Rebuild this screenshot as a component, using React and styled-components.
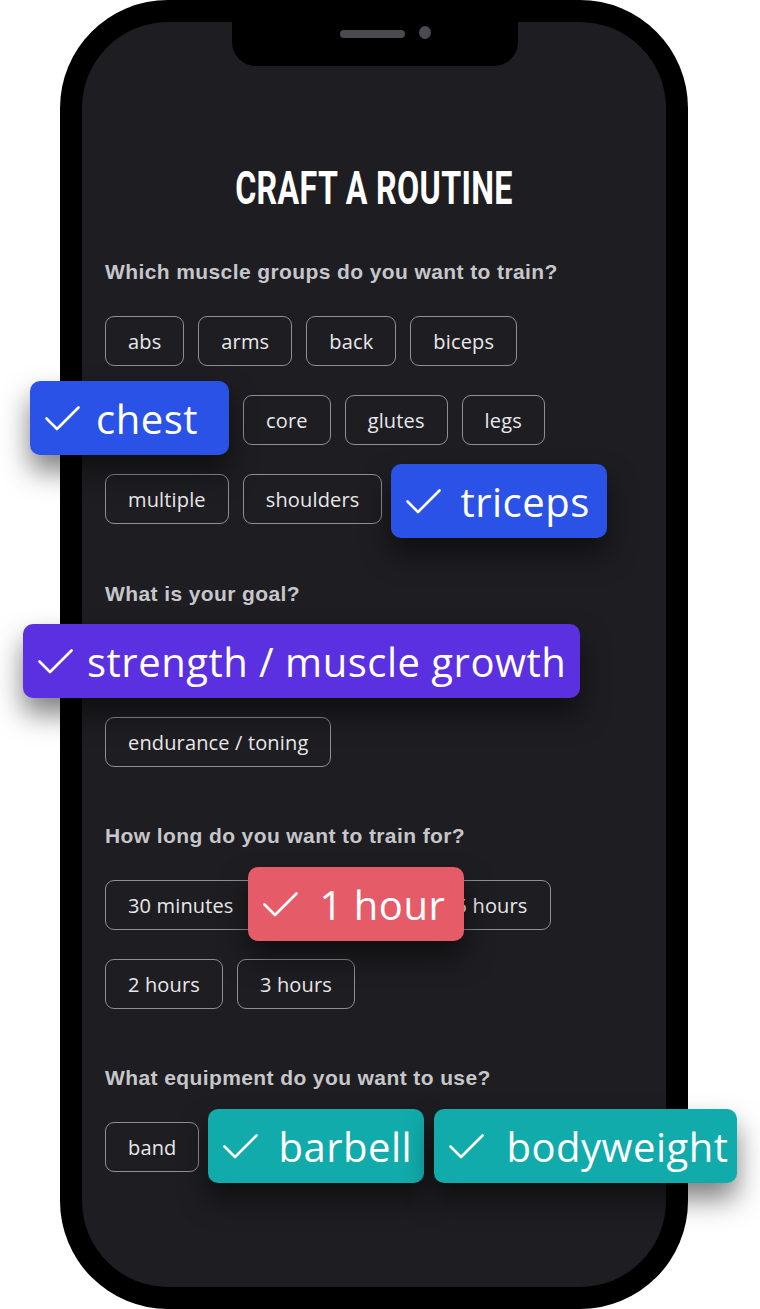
import React from "react";
import styled, { createGlobalStyle } from "styled-components";

const GlobalStyle = createGlobalStyle`
  html, body {
    margin: 0;
    padding: 0;
    background: #ffffff;
  }
  * { box-sizing: border-box; }
`;

const Stage = styled.div`
  width: 760px;
  height: 1309px;
  overflow: hidden;
  background: #ffffff;
  padding-left: 60px;
`;

const Phone = styled.div`
  width: 628px;
  height: 1309px;
  background: #000000;
  border-radius: 108px;
  padding: 22px;
`;

const Screen = styled.div`
  position: relative;
  width: 584px;
  height: 1265px;
  background: #1e1e22;
  border-radius: 86px;
  padding: 142px 23px 0 23px;
`;

const Notch = styled.div`
  position: absolute;
  top: 0;
  left: 150px;
  width: 286px;
  height: 44px;
  background: #000000;
  border-radius: 0 0 24px 24px;
  display: flex;
  align-items: flex-start;
  justify-content: center;
  gap: 14px;
  padding-top: 4px;
  padding-left: 21px;
`;

const Speaker = styled.div`
  width: 65px;
  height: 8px;
  margin-top: 4px;
  border-radius: 4px;
  background: #4a4a50;
`;

const Camera = styled.div`
  width: 12px;
  height: 13px;
  border-radius: 50%;
  background: #4a4a50;
`;

const Title = styled.h1`
  margin: 0 0 48px 0;
  height: 48px;
  line-height: 48px;
  text-align: center;
  font-family: Roboto, "Liberation Sans", sans-serif;
  font-weight: 700;
  font-size: 46px;
  color: #ffffff;
  transform: scaleX(0.7);
  letter-spacing: 0.5px;
`;

const Section = styled.section`
  width: 490px;
  margin-bottom: 57px;
`;

const Question = styled.h2`
  margin: 0 0 32px 0;
  height: 24px;
  line-height: 24px;
  font-family: "Liberation Sans", Arial, sans-serif;
  font-weight: 700;
  font-size: 21px;
  letter-spacing: 0.4px;
  color: #c6c6cb;
  white-space: nowrap;
`;

const ChipRow = styled.div`
  display: flex;
  flex-wrap: wrap;
  align-items: flex-start;
  column-gap: 14px;
  row-gap: 29px;
`;

const Chip = styled.div`
  height: 50px;
  padding: 0 22px;
  display: flex;
  align-items: center;
  border: 1.5px solid #8e8e93;
  border-radius: 9px;
  font-family: "Open Sans", Roboto, sans-serif;
  font-size: 20px;
  letter-spacing: 0.15px;
  color: #e8e8ea;
  white-space: nowrap;
`;

const Picked = styled.div`
  position: relative;
  z-index: 2;
  width: ${(p) => p.$w}px;
  height: 74px;
  margin: ${(p) => `${p.$mt}px ${p.$mr}px ${p.$mb}px ${p.$ml}px`};
  flex: none;
  display: flex;
  align-items: center;
  gap: ${(p) => p.$gap}px;
  padding-left: 15px;
  background: ${(p) => p.$bg};
  border-radius: 10px;
  box-shadow: 0 16px 28px rgba(0, 0, 0, 0.5);
  font-family: "Open Sans", Roboto, sans-serif;
  font-size: 40px;
  letter-spacing: 0.5px;
  color: #ffffff;
  white-space: nowrap;
`;

const Check = () => (
  <svg width="35" height="25" viewBox="0 0 35 25" fill="none">
    <polyline
      points="1.5,12.5 12,23 33.5,1.5"
      stroke="#ffffff"
      strokeWidth="2.6"
      strokeLinecap="round"
      strokeLinejoin="round"
    />
  </svg>
);

const BLUE = "#2b52e7";
const PURPLE = "#5a30e0";
const RED = "#e65b68";
const TEAL = "#11abab";

const PickedChip = ({ label, bg, w, ml = 0, mr = 0, mt = -13, mb = -11, gap = 18 }) => (
  <Picked $bg={bg} $w={w} $ml={ml} $mr={mr} $mt={mt} $mb={mb} $gap={gap}>
    <Check />
    <span>{label}</span>
  </Picked>
);

export default function App() {
  return (
    <>
      <GlobalStyle />
      <Stage>
        <Phone>
          <Screen>
            <Notch>
              <Speaker />
              <Camera />
            </Notch>

            <Title>CRAFT A ROUTINE</Title>

            <Section>
              <Question>Which muscle groups do you want to train?</Question>
              <ChipRow>
                <Chip>abs</Chip>
                <Chip>arms</Chip>
                <Chip>back</Chip>
                <Chip>biceps</Chip>
                <PickedChip label="chest" bg={BLUE} w={199} ml={-75} mt={-14} mb={-10} gap={16} />
                <Chip>core</Chip>
                <Chip>glutes</Chip>
                <Chip>legs</Chip>
                <Chip>multiple</Chip>
                <Chip>shoulders</Chip>
                <PickedChip label="triceps" bg={BLUE} w={216} ml={-5} mr={-40} mt={-10} mb={-13} gap={19} />
              </ChipRow>
            </Section>

            <Section>
              <Question>What is your goal?</Question>
              <ChipRow>
                <PickedChip label="strength / muscle growth" bg={PURPLE} w={557} ml={-82} mr={-100} mt={-14} mb={-10} gap={14} />
                <Chip>endurance / toning</Chip>
              </ChipRow>
            </Section>

            <Section>
              <Question>How long do you want to train for?</Question>
              <ChipRow>
                <Chip>30 minutes</Chip>
                <PickedChip label="1 hour" bg={RED} w={216} ml={-23} mr={-62} gap={22} />
                <Chip>1.5 hours</Chip>
                <Chip>2 hours</Chip>
                <Chip>3 hours</Chip>
              </ChipRow>
            </Section>

            <Section>
              <Question>What equipment do you want to use?</Question>
              <ChipRow>
                <Chip>band</Chip>
                <PickedChip label="barbell" bg={TEAL} w={216} ml={-5} mr={-4} gap={20} />
                <PickedChip label="bodyweight" bg={TEAL} w={303} mr={-160} gap={22} />
              </ChipRow>
            </Section>
          </Screen>
        </Phone>
      </Stage>
    </>
  );
}
